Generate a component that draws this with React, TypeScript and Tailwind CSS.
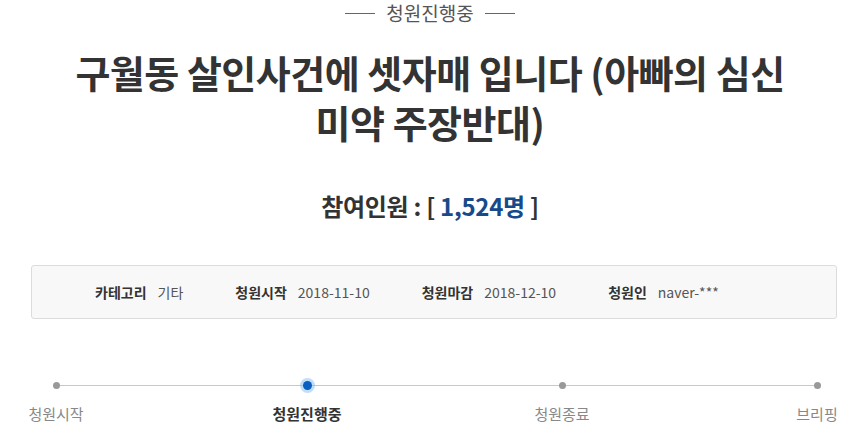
const steps = [
  { label: '청원시작', active: false },
  { label: '청원진행중', active: true },
  { label: '청원종료', active: false },
  { label: '브리핑', active: false },
];

const info = [
  { label: '카테고리', value: '기타' },
  { label: '청원시작', value: '2018-11-10' },
  { label: '청원마감', value: '2018-12-10' },
  { label: '청원인', value: 'naver-***' },
];

export default function App() {
  return (
    <div
      className="w-[860px] h-[425px] overflow-hidden bg-white text-[#333]"
      style={{ fontFamily: '"Noto Sans CJK KR", "Noto Sans", sans-serif' }}
    >
      {/* Status */}
      <div className="flex h-[26px] items-center justify-center gap-[11px]">
        <span className="block h-px w-[30px] bg-[#666]" />
        <span className="text-[19px] leading-[24px] text-[#555]">청원진행중</span>
        <span className="block h-px w-[30px] bg-[#666]" />
      </div>

      {/* Title */}
      <h1 className="mt-[21px] text-center text-[38px] font-bold leading-[50px] tracking-[-0.5px] text-[#333]">
        구월동 살인사건에 셋자매 입니다 (아빠의 심신
        <br />
        미약 주장반대)
      </h1>

      {/* Participants */}
      <div className="mt-[43px] text-center text-[24px] font-bold leading-[32px] tracking-[-0.3px] text-[#333]">
        참여인원 : [ <span className="text-[#164a8a]">1,524명</span> ]
      </div>

      {/* Info box */}
      <div className="ml-[31px] mr-[23px] mt-[43px] flex h-[54px] items-center gap-[52px] rounded-[3px] border border-[#dcdcdc] bg-[#f8f8f8] pl-[63px] text-[14px]">
        {info.map((item) => (
          <div key={item.label} className="flex items-center gap-[11px]">
            <span className="font-bold text-[#333]">{item.label}</span>
            <span className="text-[#555]">{item.value}</span>
          </div>
        ))}
      </div>

      {/* Progress */}
      <div className="mt-[62px] pl-[16px] pr-[3px]">
        <div className="relative flex justify-between">
          <span className="absolute left-[40px] right-[40px] top-[4px] h-px bg-[#c8c8c8]" />
          {steps.map((s, i) => (
            <div
              key={s.label}
              className={
                i === 1
                  ? 'relative -ml-[4px] flex w-[80px] flex-col items-center'
                  : 'relative flex w-[80px] flex-col items-center'
              }
            >
              <div className="flex h-[9px] items-center justify-center">
                {s.active ? (
                  <span className="block h-[9px] w-[9px] rounded-full bg-[#0b5fbf] shadow-[0_0_0_3px_rgba(120,180,240,0.45)]" />
                ) : (
                  <span className="block h-[7px] w-[7px] rounded-full bg-[#999]" />
                )}
              </div>
              <span
                className={
                  s.active
                    ? 'mt-[13px] whitespace-nowrap text-[15px] font-bold leading-[22px] text-[#333]'
                    : 'mt-[13px] whitespace-nowrap text-[15px] leading-[22px] text-[#888]'
                }
              >
                {s.label}
              </span>
            </div>
          ))}
        </div>
      </div>
    </div>
  );
}
